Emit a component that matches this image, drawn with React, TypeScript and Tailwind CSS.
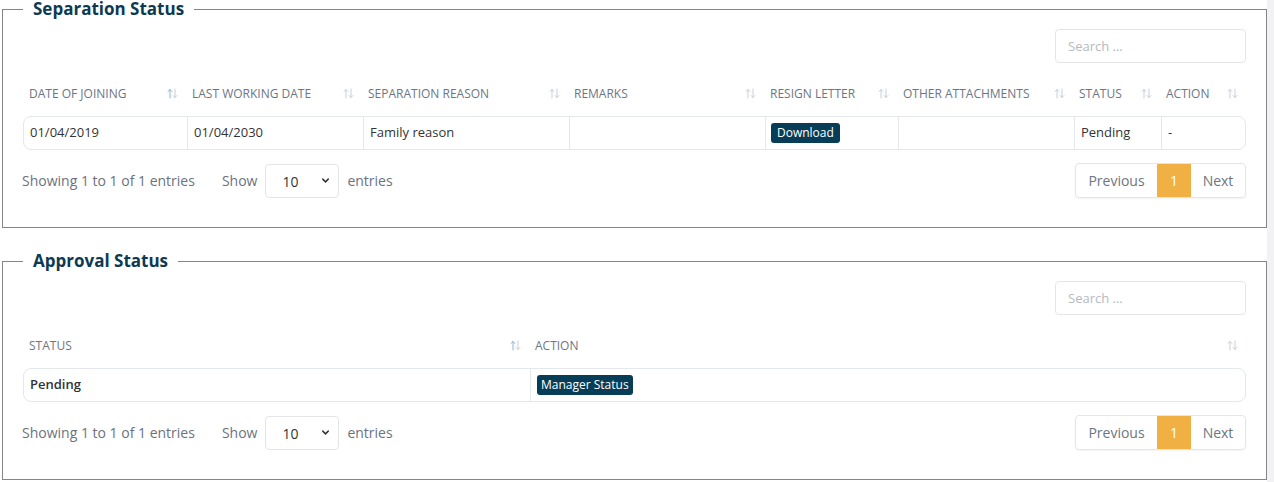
import { ChevronDown } from "lucide-react";

const font = { fontFamily: '"Open Sans", "Liberation Sans", sans-serif' };

function SortIcon({ active }: { active?: boolean }) {
  return (
    <svg width="11" height="11" viewBox="0 0 11 11" className="shrink-0">
      <g fill="none" strokeWidth="1" strokeLinecap="round" strokeLinejoin="round">
        <path d="M3 10V1.5M1 3.5l2-2 2 2" stroke={active ? "#8fb2d6" : "#c9ced6"} />
        <path d="M8 1v8.5M6 7.5l2 2 2-2" stroke="#c9ced6" />
      </g>
    </svg>
  );
}

function HeaderCell({ label, active }: { label: string; active?: boolean }) {
  return (
    <div className="flex items-center justify-between pl-[6px] pr-[8px] text-[12px] uppercase text-[#6b7684]">
      <span>{label}</span>
      <SortIcon active={active} />
    </div>
  );
}

function SearchBox() {
  return (
    <div className="flex justify-end">
      <input
        placeholder="Search ..."
        className="h-[34px] w-[191px] rounded-[4px] border border-[#e3e5e8] px-3 text-[13px] text-[#333] outline-none placeholder:text-[#b5b9bf]"
      />
    </div>
  );
}

function Footer() {
  return (
    <div className="mt-[13px] flex h-[35px] items-center justify-between text-[14px] text-[#6b7280]">
      <div className="flex items-center">
        <span className="ml-[-1px]">Showing 1 to 1 of 1 entries</span>
        <span className="ml-[27px]">Show</span>
        <div className="ml-[8px] flex h-[34px] w-[74px] items-center justify-between rounded-[4px] border border-[#e3e5e8] pl-[16px] pr-[7px] text-[#333]">
          <span className="mt-[2px]">10</span>
          <ChevronDown size={11} strokeWidth={3.2} className="text-[#333]" />
        </div>
        <span className="ml-[8px]">entries</span>
      </div>
      <div className="flex h-[35px] overflow-hidden rounded-[4px] border border-[#e3e5e8] shadow-[0_1px_2px_rgba(0,0,0,0.05)]">
        <span className="flex w-[81px] items-center justify-center text-[#6b7684]">Previous</span>
        <span className="flex w-[34px] items-center justify-center bg-[#f0b043] text-white">1</span>
        <span className="flex w-[54px] items-center justify-center text-[#6b7684]">Next</span>
      </div>
    </div>
  );
}

function Section({ title, children, className }: { title: string; children: React.ReactNode; className?: string }) {
  return (
    <fieldset className={`ml-[2px] w-[1265px] border border-[#858585] px-[20px] pb-[29px] pt-[11px] ${className ?? ""}`}>
      <legend className="ml-0 px-[10px] text-[17px] font-bold leading-[18px] text-[#0d3a52]">{title}</legend>
      {children}
    </fieldset>
  );
}

const sepCols = "grid-cols-[163px_176px_206px_196px_133px_176px_87px_1fr]";

export default function App() {
  return (
    <div className="flex min-h-[482px] bg-white" style={font}>
      <div className="w-[1267px]">
        <Section title="Separation Status">
          <SearchBox />
          <div className={`mt-[11px] grid h-[39px] ${sepCols}`}>
            <HeaderCell label="Date of Joining" active />
            <HeaderCell label="Last Working Date" />
            <HeaderCell label="Separation Reason" />
            <HeaderCell label="Remarks" />
            <HeaderCell label="Resign Letter" />
            <HeaderCell label="Other Attachments" />
            <HeaderCell label="Status" />
            <HeaderCell label="Action" />
          </div>
          <div className={`mt-[3px] grid h-[34px] ${sepCols} rounded-[8px] border border-[#e4e7eb] text-[13px] text-[#333]`}>
            <div className="flex items-center px-[6px]">01/04/2019</div>
            <div className="flex items-center border-l border-[#e4e7eb] px-[6px]">01/04/2030</div>
            <div className="flex items-center border-l border-[#e4e7eb] px-[6px]">Family reason</div>
            <div className="flex items-center border-l border-[#e4e7eb] px-[6px]" />
            <div className="flex items-center border-l border-[#e4e7eb] px-[5px]">
              <span className="rounded-[3px] bg-[#073d56] px-[6px] text-[12px] leading-[20px] text-white">Download</span>
            </div>
            <div className="flex items-center border-l border-[#e4e7eb] px-[6px]" />
            <div className="flex items-center border-l border-[#e4e7eb] px-[6px]">Pending</div>
            <div className="flex items-center border-l border-[#e4e7eb] px-[6px]">-</div>
          </div>
          <Footer />
        </Section>

        <Section title="Approval Status" className="mt-[24px]">
          <SearchBox />
          <div className="mt-[11px] grid h-[39px] grid-cols-[506px_1fr]">
            <HeaderCell label="Status" active />
            <HeaderCell label="Action" />
          </div>
          <div className="mt-[3px] grid h-[34px] grid-cols-[506px_1fr] rounded-[8px] border border-[#e4e7eb] text-[13px] text-[#333]">
            <div className="flex items-center px-[6px] font-semibold">Pending</div>
            <div className="flex items-center border-l border-[#e4e7eb] px-[6px]">
              <span className="rounded-[3px] bg-[#073d56] px-[4px] text-[12px] leading-[20px] text-white">Manager Status</span>
            </div>
          </div>
          <Footer />
        </Section>
      </div>
      <div className="flex-1 bg-[#f2f2f5]" />
    </div>
  );
}
